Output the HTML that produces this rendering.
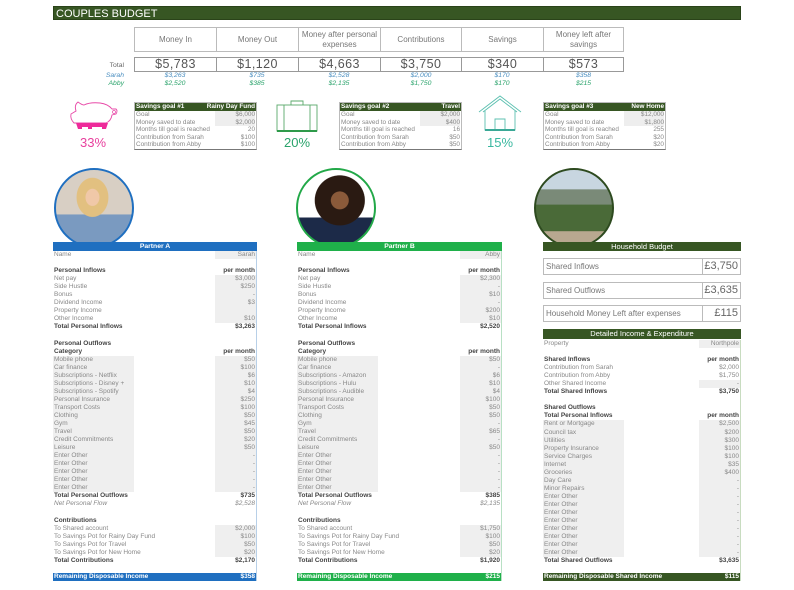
<!DOCTYPE html>
<html><head><meta charset="utf-8"><style>
*{margin:0;padding:0;box-sizing:border-box}
body{width:794px;height:590px;background:#fff;position:relative;overflow:hidden;font-family:"Liberation Sans",sans-serif;color:#888}
.a{position:absolute}
.title{left:53px;top:6px;width:688px;height:14px;background:#375623;color:#fff;font-size:11px;line-height:14px;padding-left:2px;border:1px solid #2a4319}
.hc{position:absolute;border:1px solid #bbb;font-size:8px;color:#777;text-align:center;display:flex;align-items:center;justify-content:center;line-height:10px}
.tc{position:absolute;border:1px solid #999;font-size:12.5px;color:#555;text-align:center;line-height:13px;letter-spacing:.4px}
.sm{position:absolute;font-size:6.8px;font-style:italic;text-align:center;line-height:8px}
.sg{position:absolute;width:123px;font-size:6.4px;line-height:8px;border:1px solid #bbb;border-bottom:1px solid #777}
.sg div{display:flex;justify-content:space-between;padding:0 1px;height:7.6px}
.sg .h{background:#375623;color:#fff;font-weight:bold;height:8px}
.sg span.g{background:#eee;width:40px;text-align:right}
.pct{position:absolute;font-size:13px;text-align:center;width:50px}
.tb{position:absolute;top:251px;font-size:6.5px;line-height:8.05px}
.tb>div{height:8.05px;position:relative;white-space:nowrap}
.tb .l{position:absolute;left:0;padding-left:1px}
.tb .v{position:absolute;right:0;width:41px;text-align:right;padding-right:1px}
.tb .g .v,.tb .gv .v{background:#efefef}
.tb .g .l{background:#efefef;width:81px}
.tb .b{font-weight:bold;color:#444}
.tb .b .l,.tb .b .v{color:#444}
.tb .it{font-style:italic}
.tb .bar{color:#fff;font-weight:bold}
.bar .v,.bar .l{color:#fff}
.hdr{position:absolute;top:242px;height:9px;color:#fff;font-size:6.8px;line-height:9px;text-align:center;font-weight:bold}
.box{position:absolute;left:543px;width:198px;height:17px;border:1px solid #bbb;font-size:8px;color:#777;line-height:15px;padding-left:2px}
.box span{position:absolute;right:0;top:0;width:38px;border-left:1px solid #bbb;text-align:right;padding-right:2px;font-size:11px;color:#666}
.circ{position:absolute;border-radius:50%;width:80px;height:80px;overflow:hidden}
</style></head><body>
<div class="a title">COUPLES BUDGET</div>

<div class="hc" style="left:134px;top:27px;width:83px;height:25px">Money In</div>
<div class="hc" style="left:216px;top:27px;width:83px;height:25px">Money Out</div>
<div class="hc" style="left:298px;top:27px;width:83px;height:25px">Money after personal expenses</div>
<div class="hc" style="left:380px;top:27px;width:82px;height:25px">Contributions</div>
<div class="hc" style="left:461px;top:27px;width:83px;height:25px">Savings</div>
<div class="hc" style="left:543px;top:27px;width:81px;height:25px">Money left after savings</div>

<div class="a" style="left:98px;top:62px;font-size:6.8px;color:#666;width:26px;text-align:right">Total</div>
<div class="a" style="left:98px;top:72px;font-size:6.8px;color:#4a8ec0;font-style:italic;width:26px;text-align:right">Sarah</div>
<div class="a" style="left:98px;top:80px;font-size:6.8px;color:#2aa36b;font-style:italic;width:26px;text-align:right">Abby</div>

<div class="tc" style="left:134px;top:57px;width:83px;height:15px">$5,783</div>
<div class="tc" style="left:216px;top:57px;width:83px;height:15px">$1,120</div>
<div class="tc" style="left:298px;top:57px;width:83px;height:15px">$4,663</div>
<div class="tc" style="left:380px;top:57px;width:82px;height:15px">$3,750</div>
<div class="tc" style="left:461px;top:57px;width:83px;height:15px">$340</div>
<div class="tc" style="left:543px;top:57px;width:81px;height:15px">$573</div>

<div class="sm" style="left:134px;top:72px;width:82px;color:#4a8ec0">$3,263</div>
<div class="sm" style="left:216px;top:72px;width:82px;color:#4a8ec0">$735</div>
<div class="sm" style="left:298px;top:72px;width:82px;color:#4a8ec0">$2,528</div>
<div class="sm" style="left:380px;top:72px;width:82px;color:#4a8ec0">$2,000</div>
<div class="sm" style="left:461px;top:72px;width:82px;color:#4a8ec0">$170</div>
<div class="sm" style="left:543px;top:72px;width:81px;color:#4a8ec0">$358</div>
<div class="sm" style="left:134px;top:80px;width:82px;color:#2aa36b">$2,520</div>
<div class="sm" style="left:216px;top:80px;width:82px;color:#2aa36b">$385</div>
<div class="sm" style="left:298px;top:80px;width:82px;color:#2aa36b">$2,135</div>
<div class="sm" style="left:380px;top:80px;width:82px;color:#2aa36b">$1,750</div>
<div class="sm" style="left:461px;top:80px;width:82px;color:#2aa36b">$170</div>
<div class="sm" style="left:543px;top:80px;width:81px;color:#2aa36b">$215</div>

<!-- icons -->
<svg class="a" style="left:68px;top:99px" width="52" height="34" viewBox="0 0 52 34">
<path d="M8 12 Q6 6 10 3 Q14 6 16 6 Q22 3 32 4 Q40 5 44 10 L48 10 Q50 12 48 15 L44 16 Q43 22 38 24 L6 24 Q2 20 3 15 Z" fill="none" stroke="#e84aa8" stroke-width="0.9"/>
<circle cx="46" cy="13" r="1.5" fill="none" stroke="#e84aa8" stroke-width="0.7"/>
<path d="M8 24 L40 24 L38 30 L34 30 L34 28 L24 28 L24 30 L20 30 L20 28 L14 28 L14 30 L10 30 Z" fill="#ee2a9a"/>
</svg>
<div class="pct" style="left:68px;top:135px;color:#e8409e">33%</div>
<svg class="a" style="left:276px;top:99px" width="42" height="36" viewBox="0 0 42 36">
<path d="M15 6 L15 2 L27 2 L27 6" fill="none" stroke="#5aa86a" stroke-width="0.9"/>
<rect x="1" y="6" width="40" height="26" fill="none" stroke="#5aa86a" stroke-width="0.9"/>
<line x1="8" y1="6" x2="8" y2="32" stroke="#5aa86a" stroke-width="0.9"/>
<line x1="34" y1="6" x2="34" y2="32" stroke="#5aa86a" stroke-width="0.9"/>
<rect x="1" y="31" width="40" height="2" fill="#2e9a4a"/>
</svg>
<div class="pct" style="left:272px;top:135px;color:#2aa36b">20%</div>
<svg class="a" style="left:477px;top:95px" width="46" height="38" viewBox="0 0 46 38">
<path d="M2 17 L23 1 L44 17 M6 17 L23 4 L40 17" fill="none" stroke="#5cc0b0" stroke-width="0.9"/>
<path d="M8 16 L8 35 L18 35 L18 24 L28 24 L28 35 L38 35 L38 16" fill="none" stroke="#5cc0b0" stroke-width="0.9"/>
<rect x="8" y="34" width="30" height="2" fill="#3aa896"/>
</svg>
<div class="pct" style="left:475px;top:135px;color:#3ab8a0">15%</div>

<div class="sg" style="left:134px;top:102px"><div class="h"><span>Savings goal #1</span><span>Rainy Day Fund</span></div><div><span>Goal</span><span class="g">$6,000</span></div><div><span>Money saved to date</span><span class="g">$2,000</span></div><div><span>Months till goal is reached</span><span>20</span></div><div><span>Contribution from Sarah</span><span>$100</span></div><div><span>Contribution from Abby</span><span>$100</span></div></div>
<div class="sg" style="left:339px;top:102px"><div class="h"><span>Savings goal #2</span><span>Travel</span></div><div><span>Goal</span><span class="g">$2,000</span></div><div><span>Money saved to date</span><span class="g">$400</span></div><div><span>Months till goal is reached</span><span>16</span></div><div><span>Contribution from Sarah</span><span>$50</span></div><div><span>Contribution from Abby</span><span>$50</span></div></div>
<div class="sg" style="left:543px;top:102px"><div class="h"><span>Savings goal #3</span><span>New Home</span></div><div><span>Goal</span><span class="g">$12,000</span></div><div><span>Money saved to date</span><span class="g">$1,800</span></div><div><span>Months till goal is reached</span><span>255</span></div><div><span>Contribution from Sarah</span><span>$20</span></div><div><span>Contribution from Abby</span><span>$20</span></div></div>

<!-- photos -->
<div class="circ" style="left:54px;top:168px;border:2px solid #1f6fc0;background:radial-gradient(ellipse at 48% 36%,#f0c8a8 0 12%,#e2c080 13% 28%,transparent 29%),linear-gradient(180deg,#d8cfc4 0 58%,#7a9ac0 59%)"></div>
<div class="circ" style="left:296px;top:168px;border:2px solid #22a848;background:radial-gradient(circle at 55% 40%,#8a5a3a 0 14%,#2a1a12 15% 40%,transparent 41%),linear-gradient(180deg,#fff 0 62%,#1c2a48 63%)"></div>
<div class="circ" style="left:534px;top:168px;border:2px solid #2d4a1f;background:linear-gradient(180deg,#c8d6e0 0 25%,#7a8a78 26% 45%,#4a6a38 46% 80%,#b8a890 81%)"></div>

<!-- headers -->
<div class="hdr" style="left:53px;width:204px;background:#1f6fc0">Partner A</div>
<div class="hdr" style="left:297px;width:205px;background:#1fb04a">Partner B</div>
<div class="hdr" style="left:543px;width:198px;background:#375623;font-weight:normal;font-size:7.5px">Household Budget</div>

<!-- Partner A -->
<div class="tb" style="left:53px;width:204px;border-right:1px solid #b8d0e8">
<div class="gv"><span class="l">Name</span><span class="v">Sarah</span></div>
<div></div>
<div class="b"><span class="l">Personal Inflows</span><span class="v">per month</span></div>
<div class="gv"><span class="l">Net pay</span><span class="v">$3,000</span></div>
<div class="gv"><span class="l">Side Hustle</span><span class="v">$250</span></div>
<div class="gv"><span class="l">Bonus</span><span class="v">-</span></div>
<div class="gv"><span class="l">Dividend Income</span><span class="v">$3</span></div>
<div class="gv"><span class="l">Property Income</span><span class="v">&nbsp;</span></div>
<div class="gv"><span class="l">Other Income</span><span class="v">$10</span></div>
<div class="b"><span class="l">Total Personal Inflows</span><span class="v">$3,263</span></div>
<div></div>
<div class="b"><span class="l">Personal Outflows</span></div>
<div class="b"><span class="l">Category</span><span class="v">per month</span></div>
<div class="g"><span class="l">Mobile phone</span><span class="v">$50</span></div>
<div class="g"><span class="l">Car finance</span><span class="v">$100</span></div>
<div class="g"><span class="l">Subscriptions - Netflix</span><span class="v">$6</span></div>
<div class="g"><span class="l">Subscriptions - Disney +</span><span class="v">$10</span></div>
<div class="g"><span class="l">Subscriptions - Spotify</span><span class="v">$4</span></div>
<div class="g"><span class="l">Personal Insurance</span><span class="v">$250</span></div>
<div class="g"><span class="l">Transport Costs</span><span class="v">$100</span></div>
<div class="g"><span class="l">Clothing</span><span class="v">$50</span></div>
<div class="g"><span class="l">Gym</span><span class="v">$45</span></div>
<div class="g"><span class="l">Travel</span><span class="v">$50</span></div>
<div class="g"><span class="l">Credit Commitments</span><span class="v">$20</span></div>
<div class="g"><span class="l">Leisure</span><span class="v">$50</span></div>
<div class="g"><span class="l">Enter Other</span><span class="v">-</span></div>
<div class="g"><span class="l">Enter Other</span><span class="v">-</span></div>
<div class="g"><span class="l">Enter Other</span><span class="v">-</span></div>
<div class="g"><span class="l">Enter Other</span><span class="v">-</span></div>
<div class="g"><span class="l">Enter Other</span><span class="v">-</span></div>
<div class="b"><span class="l">Total Personal Outflows</span><span class="v">$735</span></div>
<div class="it"><span class="l">Net Personal Flow</span><span class="v">$2,528</span></div>
<div></div>
<div class="b"><span class="l">Contributions</span></div>
<div class="gv"><span class="l">To Shared account</span><span class="v">$2,000</span></div>
<div class="gv"><span class="l">To Savings Pot for Rainy Day Fund</span><span class="v">$100</span></div>
<div class="gv"><span class="l">To Savings Pot for Travel</span><span class="v">$50</span></div>
<div class="gv"><span class="l">To Savings Pot for New Home</span><span class="v">$20</span></div>
<div class="b"><span class="l">Total Contributions</span><span class="v">$2,170</span></div>
<div></div>
<div class="bar" style="background:#1f6fc0"><span class="l">Remaining Disposable Income</span><span class="v">$358</span></div>
</div>

<!-- Partner B -->
<div class="tb" style="left:297px;width:205px;border-right:1px solid #b8e0c4">
<div class="gv"><span class="l">Name</span><span class="v">Abby</span></div>
<div></div>
<div class="b"><span class="l">Personal Inflows</span><span class="v">per month</span></div>
<div class="gv"><span class="l">Net pay</span><span class="v">$2,300</span></div>
<div class="gv"><span class="l">Side Hustle</span><span class="v">-</span></div>
<div class="gv"><span class="l">Bonus</span><span class="v">$10</span></div>
<div class="gv"><span class="l">Dividend Income</span><span class="v">-</span></div>
<div class="gv"><span class="l">Property Income</span><span class="v">$200</span></div>
<div class="gv"><span class="l">Other Income</span><span class="v">$10</span></div>
<div class="b"><span class="l">Total Personal Inflows</span><span class="v">$2,520</span></div>
<div></div>
<div class="b"><span class="l">Personal Outflows</span></div>
<div class="b"><span class="l">Category</span><span class="v">per month</span></div>
<div class="g"><span class="l">Mobile phone</span><span class="v">$50</span></div>
<div class="g"><span class="l">Car finance</span><span class="v">-</span></div>
<div class="g"><span class="l">Subscriptions - Amazon</span><span class="v">$6</span></div>
<div class="g"><span class="l">Subscriptions - Hulu</span><span class="v">$10</span></div>
<div class="g"><span class="l">Subscriptions - Audible</span><span class="v">$4</span></div>
<div class="g"><span class="l">Personal Insurance</span><span class="v">$100</span></div>
<div class="g"><span class="l">Transport Costs</span><span class="v">$50</span></div>
<div class="g"><span class="l">Clothing</span><span class="v">$50</span></div>
<div class="g"><span class="l">Gym</span><span class="v">-</span></div>
<div class="g"><span class="l">Travel</span><span class="v">$65</span></div>
<div class="g"><span class="l">Credit Commitments</span><span class="v">-</span></div>
<div class="g"><span class="l">Leisure</span><span class="v">$50</span></div>
<div class="g"><span class="l">Enter Other</span><span class="v">-</span></div>
<div class="g"><span class="l">Enter Other</span><span class="v">-</span></div>
<div class="g"><span class="l">Enter Other</span><span class="v">-</span></div>
<div class="g"><span class="l">Enter Other</span><span class="v">-</span></div>
<div class="g"><span class="l">Enter Other</span><span class="v">-</span></div>
<div class="b"><span class="l">Total Personal Outflows</span><span class="v">$385</span></div>
<div class="it"><span class="l">Net Personal Flow</span><span class="v">$2,135</span></div>
<div></div>
<div class="b"><span class="l">Contributions</span></div>
<div class="gv"><span class="l">To Shared account</span><span class="v">$1,750</span></div>
<div class="gv"><span class="l">To Savings Pot for Rainy Day Fund</span><span class="v">$100</span></div>
<div class="gv"><span class="l">To Savings Pot for Travel</span><span class="v">$50</span></div>
<div class="gv"><span class="l">To Savings Pot for New Home</span><span class="v">$20</span></div>
<div class="b"><span class="l">Total Contributions</span><span class="v">$1,920</span></div>
<div></div>
<div class="bar" style="background:#1fb04a"><span class="l">Remaining Disposable Income</span><span class="v">$215</span></div>
</div>

<!-- Household -->
<div class="box" style="top:258px">Shared Inflows<span>£3,750</span></div>
<div class="box" style="top:282px">Shared Outflows<span>£3,635</span></div>
<div class="box" style="top:305px">Household Money Left after expenses<span>£115</span></div>
<div class="a" style="left:543px;top:329px;width:198px;height:10px;background:#375623;color:#fff;font-size:7.5px;line-height:10px;text-align:center">Detailed Income &amp; Expenditure</div>

<div class="tb" style="left:543px;width:198px;top:340px;border-right:1px solid #c8dcc0">
<div class="gv"><span class="l">Property</span><span class="v">Northpole</span></div>
<div></div>
<div class="b"><span class="l">Shared Inflows</span><span class="v">per month</span></div>
<div><span class="l">Contribution from Sarah</span><span class="v">$2,000</span></div>
<div><span class="l">Contribution from Abby</span><span class="v">$1,750</span></div>
<div class="gv"><span class="l">Other Shared Income</span><span class="v">-</span></div>
<div class="b"><span class="l">Total Shared Inflows</span><span class="v">$3,750</span></div>
<div></div>
<div class="b"><span class="l">Shared Outflows</span></div>
<div class="b"><span class="l">Total Personal Inflows</span><span class="v">per month</span></div>
<div class="g"><span class="l">Rent or Mortgage</span><span class="v">$2,500</span></div>
<div class="g"><span class="l">Council tax</span><span class="v">$200</span></div>
<div class="g"><span class="l">Utilities</span><span class="v">$300</span></div>
<div class="g"><span class="l">Property Insurance</span><span class="v">$100</span></div>
<div class="g"><span class="l">Service Charges</span><span class="v">$100</span></div>
<div class="g"><span class="l">Internet</span><span class="v">$35</span></div>
<div class="g"><span class="l">Groceries</span><span class="v">$400</span></div>
<div class="g"><span class="l">Day Care</span><span class="v">-</span></div>
<div class="g"><span class="l">Minor Repairs</span><span class="v">-</span></div>
<div class="g"><span class="l">Enter Other</span><span class="v">-</span></div>
<div class="g"><span class="l">Enter Other</span><span class="v">-</span></div>
<div class="g"><span class="l">Enter Other</span><span class="v">-</span></div>
<div class="g"><span class="l">Enter Other</span><span class="v">-</span></div>
<div class="g"><span class="l">Enter Other</span><span class="v">-</span></div>
<div class="g"><span class="l">Enter Other</span><span class="v">-</span></div>
<div class="g"><span class="l">Enter Other</span><span class="v">-</span></div>
<div class="g"><span class="l">Enter Other</span><span class="v">-</span></div>
<div class="b"><span class="l">Total Shared Outflows</span><span class="v">$3,635</span></div>
<div></div>
<div class="bar" style="background:#375623"><span class="l">Remaining Disposable Shared Income</span><span class="v">$115</span></div>
</div>
</body></html>
